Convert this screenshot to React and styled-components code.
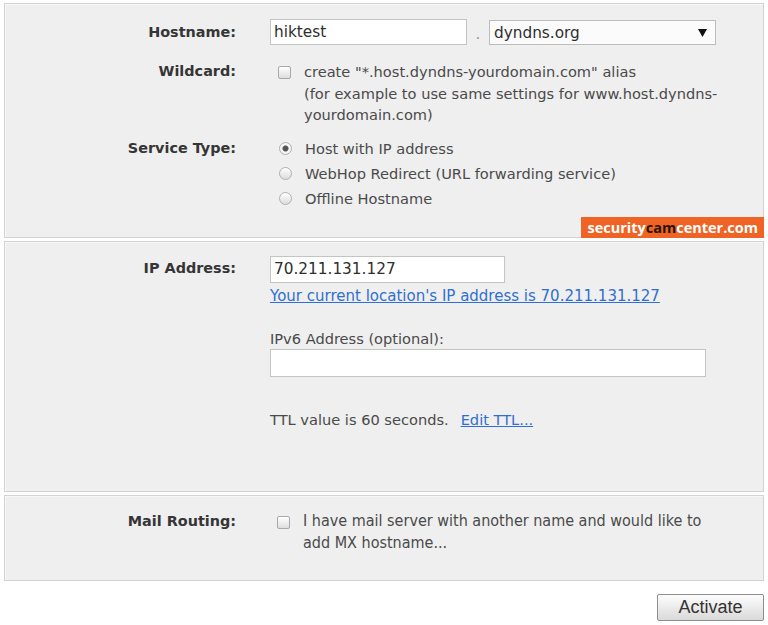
import React from 'react';
import styled, { createGlobalStyle } from 'styled-components';

const GlobalStyle = createGlobalStyle`
  body {
    margin: 0;
    background: #ffffff;
    font-family: "DejaVu Sans", "Liberation Sans", sans-serif;
    color: #4a4a4a;
  }
`;

const Page = styled.div`
  padding: 3px 4px 0 4px;
  display: flex;
  flex-direction: column;
  gap: 3px;
`;

const Panel = styled.section`
  position: relative;
  box-sizing: border-box;
  height: ${(p) => p.$h}px;
  padding-top: ${(p) => p.$top}px;
  background: #efefef;
  border: 1px solid #d2d2d2;
  box-shadow: inset 1px 1px 0 #f8f8f8;
  display: flex;
  flex-direction: column;
`;

const Row = styled.div`
  display: grid;
  grid-template-columns: 231px 1fr;
  column-gap: 34px;
  align-items: start;
  margin-top: ${(p) => p.$mt || 0}px;
`;

const Label = styled.div`
  text-align: right;
  font-weight: bold;
  font-size: 14.4px;
  color: #353535;
  line-height: ${(p) => p.$lh}px;
`;

const Field = styled.div`
  display: flex;
  flex-direction: column;
`;

const Inline = styled.div`
  display: flex;
  align-items: center;
`;

const TextInput = styled.div`
  box-sizing: border-box;
  width: ${(p) => p.$w}px;
  height: ${(p) => p.$hgt || 26}px;
  background: #ffffff;
  border: 1px solid #c4c4c4;
  padding-left: 3px;
  font-size: 15.3px;
  line-height: ${(p) => (p.$hgt || 26) - 2}px;
  color: #2e2e2e;
  margin-top: ${(p) => p.$mt || 0}px;
`;

const Dot = styled.span`
  width: 22px;
  text-align: center;
  color: #9a9a9a;
  font-size: 15px;
  padding-top: 4px;
`;

const Select = styled.div`
  box-sizing: border-box;
  width: 227px;
  height: 25px;
  margin-top: 1px;
  background: #fbfbfb;
  border: 1px solid #bcbcbc;
  padding: 0 8px 0 4px;
  display: flex;
  align-items: center;
  justify-content: space-between;
  font-size: 15.3px;
  color: #2e2e2e;
`;

const Option = styled.label`
  display: flex;
  align-items: center;
  font-size: 14.6px;
  line-height: ${(p) => p.$lh}px;
  color: #4a4a4a;
`;

const Check = styled.span`
  box-sizing: border-box;
  flex: none;
  width: 13px;
  height: 13px;
  margin: 0 13px 0 ${(p) => p.$ml}px;
  border: 1px solid #a9a9a9;
  border-radius: 2px;
  background: linear-gradient(#ffffff, #dedede);
  align-self: flex-start;
  margin-top: ${(p) => p.$mt}px;
`;

const Radio = styled.span`
  box-sizing: border-box;
  flex: none;
  width: 13px;
  height: 13px;
  margin: 0 13px 0 9px;
  border: 1px solid #b0b0b0;
  border-radius: 50%;
  background: ${(p) =>
    p.$on
      ? 'radial-gradient(circle, #555 0 2.5px, #f4f4f4 3.5px)'
      : 'linear-gradient(#ffffff, #dcdcdc)'};
`;

const Lines = styled.div`
  font-size: ${(p) => p.$fs || 14.6}px;
  line-height: ${(p) => p.$lh}px;
  color: #4a4a4a;
  font-family: ${(p) =>
    p.$narrow ? '"DejaVu Sans Condensed", "DejaVu Sans", sans-serif' : 'inherit'};
`;

const Text = styled.div`
  font-size: 14.6px;
  line-height: 20px;
  color: #4a4a4a;
  margin-top: ${(p) => p.$mt || 0}px;
`;

const Link = styled.a`
  color: #2f6fcf;
  text-decoration: underline;
  font-size: ${(p) => p.$fs || 14.6}px;
  margin-left: ${(p) => p.$ml || 0}px;
`;

const Watermark = styled.div`
  position: absolute;
  right: -1px;
  bottom: -1px;
  height: 21px;
  padding: 0 6px;
  background: #ef6424;
  color: #ffffff;
  font-family: "Open Sans", "DejaVu Sans", sans-serif;
  font-weight: bold;
  font-size: 14.5px;
  line-height: 21px;
  span {
    color: #2a1406;
  }
`;

const Footer = styled.div`
  display: flex;
  justify-content: flex-end;
  margin-top: 10px;
`;

const Button = styled.button`
  box-sizing: border-box;
  width: 107px;
  height: 27px;
  border: 1px solid #8e8e8e;
  border-radius: 2px;
  background: linear-gradient(#fdfdfd, #d9d9d9);
  font-family: "Liberation Sans", Arial, sans-serif;
  font-size: 18px;
  color: #333333;
  padding: 0;
`;

function Caret() {
  return (
    <svg width="9" height="8" viewBox="0 0 9 8">
      <path d="M0 0 H9 L4.5 8 Z" fill="#111" />
    </svg>
  );
}

export default function App() {
  return (
    <>
      <GlobalStyle />
      <Page>
        <Panel $h={235} $top={15}>
          <Row>
            <Label $lh={26}>Hostname:</Label>
            <Inline>
              <TextInput $w={197}>hiktest</TextInput>
              <Dot>.</Dot>
              <Select>
                dyndns.org
                <Caret />
              </Select>
            </Inline>
          </Row>
          <Row $mt={16}>
            <Label $lh={21.5}>Wildcard:</Label>
            <Option $lh={21.5}>
              <Check $ml={8} $mt={5} />
              <Lines $lh={21.5}>
                create "*.host.dyndns-yourdomain.com" alias
                <br />
                (for example to use same settings for www.host.dyndns-
                <br />
                yourdomain.com)
              </Lines>
            </Option>
          </Row>
          <Row $mt={10}>
            <Label $lh={25}>Service Type:</Label>
            <Field>
              <Option $lh={25}>
                <Radio $on />
                Host with IP address
              </Option>
              <Option $lh={25}>
                <Radio />
                WebHop Redirect (URL forwarding service)
              </Option>
              <Option $lh={25}>
                <Radio />
                Offline Hostname
              </Option>
            </Field>
          </Row>
          <Watermark>
            security<span>cam</span>center.com
          </Watermark>
        </Panel>

        <Panel $h={251} $top={14}>
          <Row>
            <Label $lh={25}>IP Address:</Label>
            <Field>
              <TextInput $w={235} $hgt={27}>70.211.131.127</TextInput>
              <Text $mt={3}>
                <Link href="#" $fs={15}>Your current location's IP address is 70.211.131.127</Link>
              </Text>
              <Text $mt={23}>IPv6 Address (optional):</Text>
              <TextInput $w={436} $hgt={28} />
              <Text $mt={33}>
                TTL value is 60 seconds.
                <Link href="#" $ml={12}>Edit TTL...</Link>
              </Text>
            </Field>
          </Row>
        </Panel>

        <Panel $h={86} $top={14}>
          <Row>
            <Label $lh={22}>Mail Routing:</Label>
            <Option $lh={22}>
              <Check $ml={7} $mt={6} />
              <Lines $lh={22} $fs={16} $narrow>
                I have mail server with another name and would like to
                <br />
                add MX hostname...
              </Lines>
            </Option>
          </Row>
        </Panel>

        <Footer>
          <Button>Activate</Button>
        </Footer>
      </Page>
    </>
  );
}
